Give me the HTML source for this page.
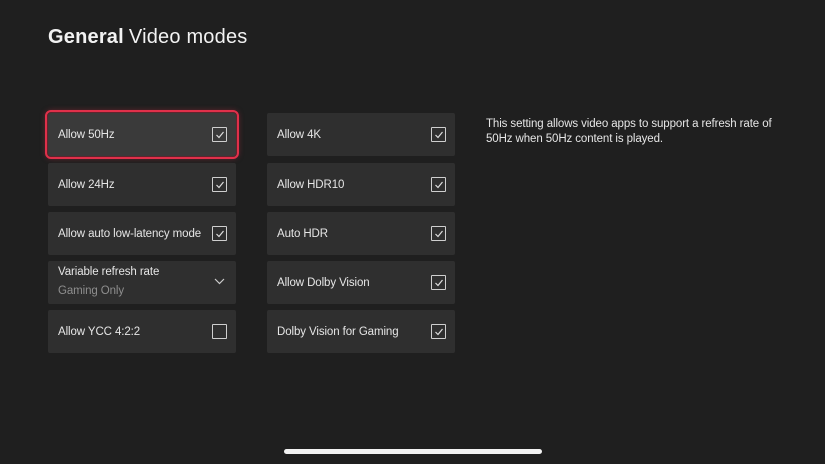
<!DOCTYPE html>
<html><head><style>
body{margin:0;width:825px;height:464px;background:#1f1f1f;font-family:"Liberation Sans",sans-serif;color:#e6e6e6;position:relative;overflow:hidden}
.t{position:absolute;left:48px;top:26px;font-size:20px;color:#f2f2f2;letter-spacing:.2px}
.t b{font-weight:bold;margin-right:5px}
.tile{position:absolute;width:188px;height:43px;background:#2f2f2f;border-radius:2px;font-size:11.5px;letter-spacing:-.1px}
.tile span{position:absolute;left:10px;top:16px}
.cb{position:absolute;right:9px;top:14px;width:13px;height:13px;border:1.3px solid #cfcfcf;border-radius:1px}
.cb svg{position:absolute;left:1.5px;top:1.5px}
.foc{background:#3a3a3a;outline:2px solid #e0304a;outline-offset:1px;box-shadow:0 0 6px 2px rgba(224,48,74,.5);border-radius:3px}
.desc{position:absolute;left:486px;top:117px;font-size:11.5px;line-height:15px;color:#e6e6e6;width:300px;letter-spacing:-.1px}
.bar{position:absolute;left:284px;top:449px;width:258px;height:5px;border-radius:3px;background:#f2f2f2}
</style></head><body>
<div class="t"><b>General</b>Video modes</div>
<div class="tile foc" style="left:48px;top:113px"><span>Allow 50Hz</span><div class="cb"><svg width="10" height="10"><path d="M1.5 5 L4 7.5 L8.5 2" stroke="#ddd" stroke-width="1.2" fill="none"/></svg></div></div>
<div class="tile" style="left:48px;top:163px"><span>Allow 24Hz</span><div class="cb"><svg width="10" height="10"><path d="M1.5 5 L4 7.5 L8.5 2" stroke="#ddd" stroke-width="1.2" fill="none"/></svg></div></div>
<div class="tile" style="left:48px;top:212px"><span>Allow auto low-latency mode</span><div class="cb"><svg width="10" height="10"><path d="M1.5 5 L4 7.5 L8.5 2" stroke="#ddd" stroke-width="1.2" fill="none"/></svg></div></div>
<div class="tile" style="left:48px;top:261px"><span style="top:5px">Variable refresh rate</span><span style="top:24px;color:#8e8e8e">Gaming Only</span><svg style="position:absolute;right:11px;top:17px" width="11" height="7"><path d="M1 1 L5.5 5.5 L10 1" stroke="#ccc" stroke-width="1.2" fill="none"/></svg></div>
<div class="tile" style="left:48px;top:310px"><span>Allow YCC 4:2:2</span><div class="cb"></div></div>
<div class="tile" style="left:267px;top:113px"><span>Allow 4K</span><div class="cb"><svg width="10" height="10"><path d="M1.5 5 L4 7.5 L8.5 2" stroke="#ddd" stroke-width="1.2" fill="none"/></svg></div></div>
<div class="tile" style="left:267px;top:163px"><span>Allow HDR10</span><div class="cb"><svg width="10" height="10"><path d="M1.5 5 L4 7.5 L8.5 2" stroke="#ddd" stroke-width="1.2" fill="none"/></svg></div></div>
<div class="tile" style="left:267px;top:212px"><span>Auto HDR</span><div class="cb"><svg width="10" height="10"><path d="M1.5 5 L4 7.5 L8.5 2" stroke="#ddd" stroke-width="1.2" fill="none"/></svg></div></div>
<div class="tile" style="left:267px;top:261px"><span>Allow Dolby Vision</span><div class="cb"><svg width="10" height="10"><path d="M1.5 5 L4 7.5 L8.5 2" stroke="#ddd" stroke-width="1.2" fill="none"/></svg></div></div>
<div class="tile" style="left:267px;top:310px"><span>Dolby Vision for Gaming</span><div class="cb"><svg width="10" height="10"><path d="M1.5 5 L4 7.5 L8.5 2" stroke="#ddd" stroke-width="1.2" fill="none"/></svg></div></div>
<div class="desc">This setting allows video apps to support a refresh rate of<br>50Hz when 50Hz content is played.</div>
<div class="bar"></div>
</body></html>
